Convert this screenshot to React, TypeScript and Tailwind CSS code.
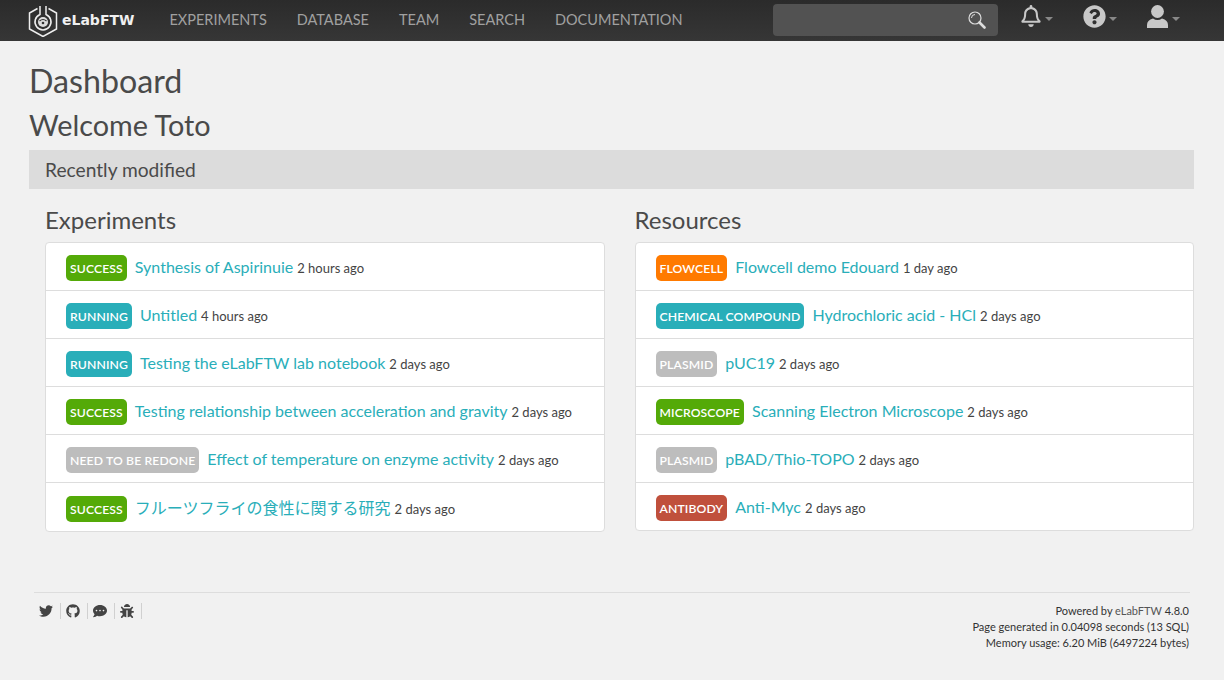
import { FaTwitter, FaGithub, FaCommentDots, FaBug, FaRegBell, FaQuestionCircle } from "react-icons/fa";

const NAV_ITEMS = ["EXPERIMENTS", "DATABASE", "TEAM", "SEARCH", "DOCUMENTATION"];

const GREEN = "bg-[#54aa08]";
const TEAL = "bg-[#29aeb9]";
const GRAY = "bg-[#bdbdbd]";
const ORANGE = "bg-[#ff7a00]";
const RED = "bg-[#c0503c]";

const EXPERIMENTS: Item[] = [
  { label: "SUCCESS", color: GREEN, title: "Synthesis of Aspirinuie", when: "2 hours ago" },
  { label: "RUNNING", color: TEAL, title: "Untitled", when: "4 hours ago" },
  { label: "RUNNING", color: TEAL, title: "Testing the eLabFTW lab notebook", when: "2 days ago" },
  { label: "SUCCESS", color: GREEN, title: "Testing relationship between acceleration and gravity", when: "2 days ago" },
  { label: "NEED TO BE REDONE", color: GRAY, title: "Effect of temperature on enzyme activity", when: "2 days ago" },
  { label: "SUCCESS", color: GREEN, title: "フルーツフライの食性に関する研究", when: "2 days ago", tall: true },
];

const RESOURCES: Item[] = [
  { label: "FLOWCELL", color: ORANGE, title: "Flowcell demo Edouard", when: "1 day ago" },
  { label: "CHEMICAL COMPOUND", color: TEAL, title: "Hydrochloric acid - HCl", when: "2 days ago" },
  { label: "PLASMID", color: GRAY, title: "pUC19", when: "2 days ago" },
  { label: "MICROSCOPE", color: GREEN, title: "Scanning Electron Microscope", when: "2 days ago" },
  { label: "PLASMID", color: GRAY, title: "pBAD/Thio-TOPO", when: "2 days ago" },
  { label: "ANTIBODY", color: RED, title: "Anti-Myc", when: "2 days ago" },
];

type Item = { label: string; color: string; title: string; when: string; tall?: boolean };

function Logo() {
  return (
    <svg width="30" height="32" viewBox="0 0 30 32" fill="none" stroke="#eeeeee" strokeWidth="1.5">
      <path d="M9.5 3.5 L1.5 8 V24 L15 31.5 L28.5 24 V8 L20.5 3.5" />
      <path d="M12 1 V9.5 A8 8 0 1 0 18 9.5 V1" />
      <circle cx="15" cy="17" r="5" fill="#dddddd" stroke="none" />
      <path d="M11.5 16 Q15 13 18.5 16" stroke="#333333" strokeWidth="1.2" />
      <circle cx="15" cy="18" r="1.3" fill="#333333" stroke="none" />
    </svg>
  );
}

function Caret() {
  return <span className="ml-[3px] mt-[5px] border-x-4 border-t-4 border-x-transparent border-t-[#888888]" />;
}

function Panel({ heading, items }: { heading: string; items: Item[] }) {
  return (
    <section className="flex-1 min-w-0">
      <h3 className="text-[24px] leading-[29px] text-[#4a4a4a] mb-[8px]">{heading}</h3>
      <ul className="bg-white border border-[#dddddd] rounded">
        {items.map((item, i) => (
          <li
            key={i}
            className={`pl-5 flex items-center whitespace-nowrap ${
              i === 0 ? "h-[47px] pt-[3px]" : item.tall ? "h-[49px] pt-[4px] border-t border-[#dddddd]" : "h-[48px] pt-[3px] border-t border-[#dddddd]"
            }`}
          >
            <span className={`${item.color} text-white text-[12.2px] tracking-[0.12px] font-semibold rounded-[5px] h-[26px] pt-[2px] px-1 flex items-center mr-2`}>
              {item.label}
            </span>
            <a className="text-[16px] text-[#29aeb9] mb-[2px]">{item.title}</a>
            <span className="text-[13px] text-[#444444] ml-1 mt-[2px]">{item.when}</span>
          </li>
        ))}
      </ul>
    </section>
  );
}

export default function App() {
  return (
    <div className="min-h-[680px] bg-[#f1f1f1] text-[#4a4a4a] font-['Lato','Noto_Sans_CJK_JP',sans-serif]">
      <nav className="h-[41px] bg-gradient-to-b from-[#2b2b2b] to-[#363636] flex items-center pl-[28px] pr-[44px]">
        <Logo />
        <span className="ml-[4px] text-[14px] font-bold text-[#f0f0f0] font-['DejaVu_Sans',sans-serif]">eLabFTW</span>
        <ul className="flex ml-[35px] mb-[1px] gap-[30px] text-[14.5px] text-[#a0a0a0]">
          {NAV_ITEMS.map((name) => (
            <li key={name}>{name}</li>
          ))}
        </ul>
        <div className="ml-auto w-[225px] h-[32px] mb-[1px] bg-[#525252] rounded flex items-center justify-end pr-[12px]">
          <svg width="18" height="18" viewBox="0 0 18 18" fill="none" stroke="#dddddd">
            <circle cx="7" cy="7" r="6" strokeWidth="1.2" />
            <path d="M3.5 7 A3.5 3.5 0 0 1 7 3.5" strokeWidth="1" />
            <path d="M11.5 11.5 L16.5 16.5" strokeWidth="2.6" strokeLinecap="round" />
          </svg>
        </div>
        <div className="ml-[22px] mb-[9px] flex items-center text-[#c8c8c8]">
          <FaRegBell size={22} />
          <Caret />
        </div>
        <div className="ml-[30px] mb-[9px] flex items-center text-[#c8c8c8]">
          <FaQuestionCircle size={23} />
          <Caret />
        </div>
        <div className="ml-[30px] mb-[9px] flex items-center">
          <svg width="21" height="23" viewBox="0 0 21 23" fill="#c8c8c8">
            <circle cx="10.5" cy="6.5" r="6.4" />
            <path d="M0 23 V20 Q0 15 6 13.5 Q10.5 16.5 15 13.5 Q21 15 21 20 V23 Z" />
          </svg>
          <span className="ml-[4px] mt-[5px] border-x-4 border-t-4 border-x-transparent border-t-[#888888]" />
        </div>
      </nav>

      <main className="px-[29px] pt-[20px]">
        <h1 className="text-[32.2px] leading-[40px]">Dashboard</h1>
        <h2 className="text-[28.8px] leading-[34px] mt-[7px]">Welcome Toto</h2>
        <div className="h-[39px] mt-[8px] mr-[1px] pt-[1px] bg-[#dcdcdc] px-4 flex items-center text-[19.2px]">Recently modified</div>
        <div className="flex gap-[30px] pl-4 pr-[1px] mt-[16px]">
          <Panel heading="Experiments" items={EXPERIMENTS} />
          <Panel heading="Resources" items={RESOURCES} />
        </div>
      </main>

      <footer className="mx-[34px] mt-[60px] border-t border-[#dddddd] pt-[10px] flex justify-between items-start">
        <div className="flex text-[#444444]">
          {[FaTwitter, FaGithub, FaCommentDots, FaBug].map((Icon, i) => (
            <span key={i} className="w-[27px] h-[16px] pl-[5px] flex items-center border-r border-[#d0d0d0]">
              <Icon size={14} />
            </span>
          ))}
        </div>
        <p className="text-[11px] leading-[16px] text-right text-[#333333] pr-[1px]">
          Powered by <span className="text-[#555555]">eLabFTW</span> 4.8.0
          <br />
          Page generated in 0.04098 seconds (13 SQL)
          <br />
          Memory usage: 6.20 MiB (6497224 bytes)
        </p>
      </footer>
    </div>
  );
}
